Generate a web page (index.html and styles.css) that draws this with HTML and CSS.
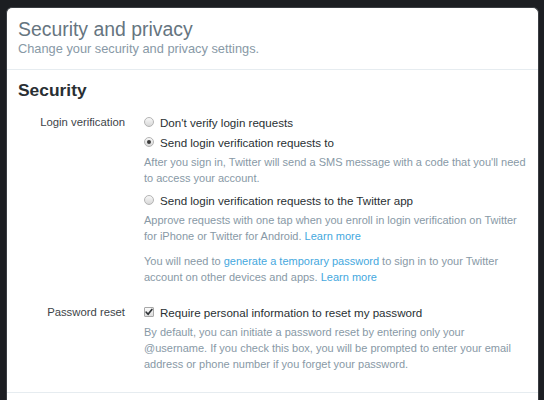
FILE: index.html
```html
<!DOCTYPE html>
<html lang="en">
<head>
<meta charset="utf-8">
<title>Security and privacy</title>
<link rel="stylesheet" href="styles.css">
</head>
<body>
<div class="card">
  <header class="head">
    <h1 class="title">Security and privacy</h1>
    <p class="subtitle">Change your security and privacy settings.</p>
  </header>
  <section class="sec">
    <h2 class="sec-title">Security</h2>
    <div class="row">
      <div class="label">Login verification</div>
      <div class="ctrl">
        <label class="opt"><span class="radio"></span>Don't verify login requests</label>
        <label class="opt"><span class="radio on"></span>Send login verification requests to</label>
        <p class="desc">After you sign in, Twitter will send a SMS message with a code that you'll need to access your account.</p>
        <label class="opt opt-gap"><span class="radio"></span>Send login verification requests to the Twitter app</label>
        <p class="desc">Approve requests with one tap when you enroll in login verification on Twitter for iPhone or Twitter for Android. <a class="link" href="#">Learn more</a></p>
        <p class="desc para">You will need to <a class="link" href="#">generate a temporary password</a> to sign in to your Twitter account on other devices and apps. <a class="link" href="#">Learn more</a></p>
      </div>
    </div>
    <div class="row row-gap">
      <div class="label">Password reset</div>
      <div class="ctrl">
        <label class="opt"><span class="check"><svg width="10" height="10" viewBox="0 0 10 10"><path d="M2.2 5.2 L4.1 7.3 L7.9 2.4" fill="none" stroke="#2f3336" stroke-width="1.7" stroke-linecap="round" stroke-linejoin="round"/></svg></span>Require personal information to reset my password</label>
        <p class="desc">By default, you can initiate a password reset by entering only your @username. If you check this box, you will be prompted to enter your email address or phone number if you forget your password.</p>
      </div>
    </div>
  </section>
</div>
</body>
</html>
```

FILE: styles.css
```css
body {
  margin: 0;
  background: #1c1e22;
  font-family: "Liberation Sans", Arial, sans-serif;
}

.card {
  margin: 7px 5px 0 6px;
  background: #fff;
  border: 1px solid #3a3d42;
  border-bottom: none;
  border-radius: 6px 6px 0 0;
  height: 400px;
}

.head {
  padding: 9px 11px 12px;
  border-bottom: 1px solid #e6ecf0;
}

.title {
  margin: 0;
  font-size: 19.4px;
  line-height: 24px;
  font-weight: normal;
  color: #66757f;
}

.subtitle {
  margin: 0;
  font-size: 12.8px;
  line-height: 16px;
  color: #8899a6;
}

.sec {
  padding: 9px 8px 20px 11px;
  border-bottom: 1px solid #e6ecf0;
}

.sec-title {
  margin: 0 0 11px;
  font-size: 17.4px;
  line-height: 22px;
  font-weight: bold;
  color: #292f33;
}

.row {
  display: flex;
  gap: 19px;
}

.row-gap {
  margin-top: 17px;
}

.label {
  width: 107px;
  flex: none;
  text-align: right;
  font-size: 11.3px;
  line-height: 20px;
  color: #3d4449;
}

.ctrl {
  flex: 1;
}

.opt {
  display: flex;
  align-items: center;
  height: 20px;
  font-size: 11.6px;
  color: #292f33;
}

.opt-gap {
  margin-top: 4px;
}

.radio {
  width: 10px;
  height: 10px;
  margin-right: 6px;
  box-sizing: border-box;
  border-radius: 50%;
  border: 1px solid #b4b4b4;
  background: linear-gradient(#f8f8f8, #d8d8d8);
  display: flex;
  align-items: center;
  justify-content: center;
}

.radio.on::after {
  content: "";
  width: 4px;
  height: 4px;
  border-radius: 50%;
  background: #3a3a3a;
}

.check {
  width: 10px;
  height: 10px;
  margin-right: 6px;
  box-sizing: border-box;
  border: 1px solid #a8a8a8;
  border-radius: 1px;
  background: linear-gradient(#fbfbfb, #dcdcdc);
  display: flex;
  align-items: center;
  justify-content: center;
}

.check svg {
  display: block;
  flex: none;
}

.desc {
  margin: 2px 0 0;
  font-size: 11px;
  line-height: 16px;
  color: #8899a6;
}

.para {
  margin-top: 9px;
}

.link {
  color: #45a8de;
  text-decoration: none;
}
```
